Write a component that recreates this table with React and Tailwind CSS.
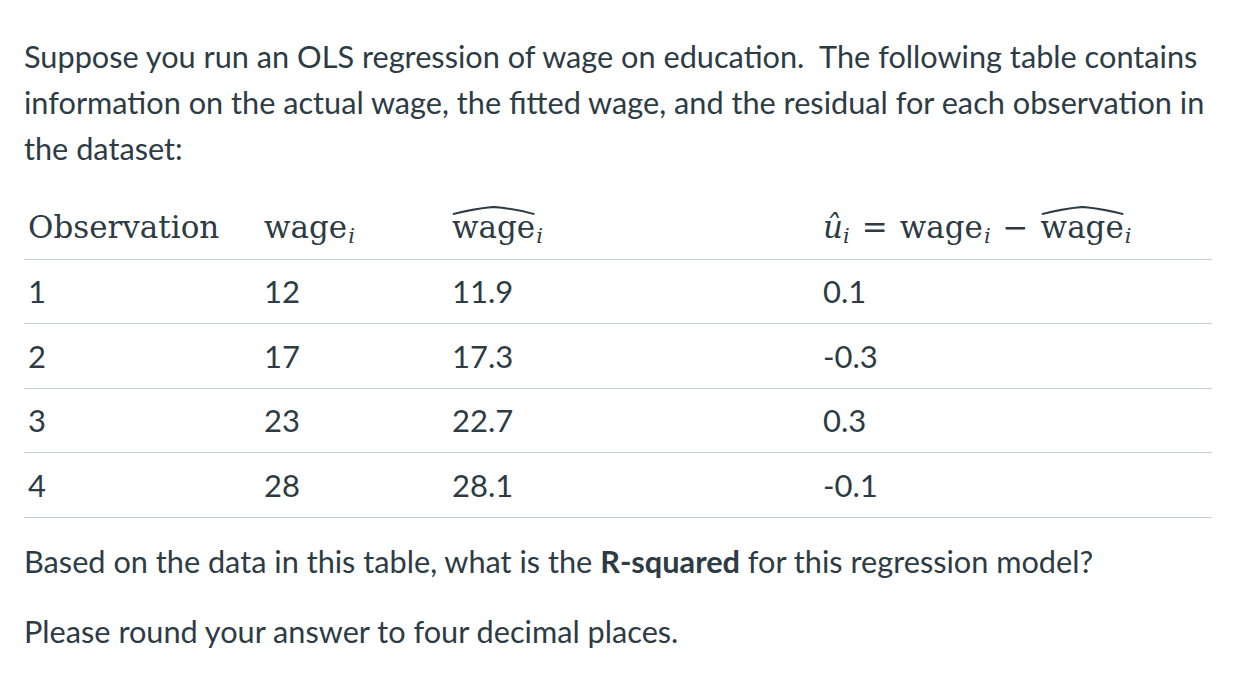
import React from 'react';

const sans = { fontFamily: 'Lato, "Open Sans", sans-serif' };
const serif = { fontFamily: '"DejaVu Serif", "Liberation Serif", serif' };

function Wage({ hat }) {
  return (
    <span className="inline-flex items-baseline">
      <span className="relative inline-block">
        {hat && (
          <svg className="absolute left-0 top-[2px] w-full h-[9px]" viewBox="0 0 100 10" preserveAspectRatio="none">
            <path d="M1 9 Q25 3 50 1 Q75 3 99 9" fill="none" stroke="#2d3b45" strokeWidth="2" vectorEffect="non-scaling-stroke" />
          </svg>
        )}
        wage
      </span>
      <sub className="italic text-[21px] ml-[1px] relative top-[5px]">i</sub>
    </span>
  );
}

const rows = [
  ['1', '12', '11.9', '0.1'],
  ['2', '17', '17.3', '-0.3'],
  ['3', '23', '22.7', '0.3'],
  ['4', '28', '28.1', '-0.1'],
];

export default function App() {
  return (
    <div className="min-h-screen bg-white text-[#2d3b45] px-6 pt-[34px]" style={sans}>
      <p className="text-[30.7px] leading-[46px] w-[1195px]">
        Suppose you run an OLS regression of wage on education.&nbsp; The following table contains information on the actual wage, the fitted wage, and the residual for each observation in the dataset:
      </p>

      <table className="w-[1188px] mt-[24px] border-collapse">
        <thead>
          <tr className="border-b border-[#c7cdd1] h-[63px]" style={serif}>
            <th className="text-left font-normal text-[31px] pl-1 w-[240px] align-middle">Observation</th>
            <th className="text-left font-normal text-[31px] w-[188px]"><Wage /></th>
            <th className="text-left font-normal text-[31px] w-[371px]"><Wage hat /></th>
            <th className="text-left font-normal text-[31px]">
              <span className="inline-flex items-baseline gap-[12px]">
                <span className="inline-flex items-baseline">
                  <span className="italic">û</span>
                  <sub className="italic text-[21px] relative top-[5px]">i</sub>
                </span>
                <span>=</span>
                <Wage />
                <span>−</span>
                <Wage hat />
              </span>
            </th>
          </tr>
        </thead>
        <tbody className="text-[31px]">
          {rows.map((r) => (
            <tr key={r[0]} className="border-b border-[#c7cdd1] h-[64.5px]">
              <td className="pl-1">{r[0]}</td>
              <td>{r[1]}</td>
              <td>{r[2]}</td>
              <td>{r[3]}</td>
            </tr>
          ))}
        </tbody>
      </table>

      <p className="text-[30.7px] leading-[46px] mt-[21px]">
        Based on the data in this table, what is the <strong className="font-bold">R-squared</strong> for this regression model?
      </p>
      <p className="text-[30.7px] leading-[46px] mt-[24px]">Please round your answer to four decimal places.</p>
    </div>
  );
}
